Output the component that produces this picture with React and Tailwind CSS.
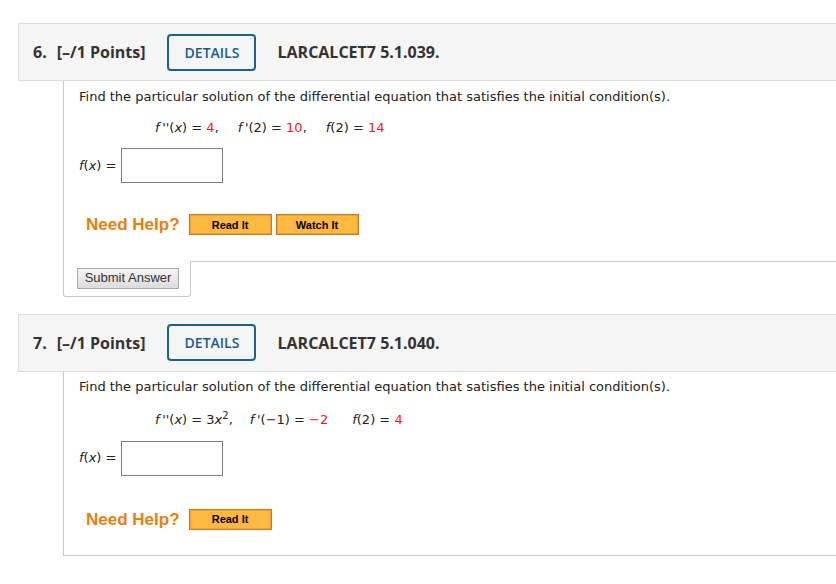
import React from "react";

const vf = { fontFamily: '"DejaVu Sans", Verdana, sans-serif' };
const os = { fontFamily: '"Open Sans", "Noto Sans", sans-serif' };
const ar = { fontFamily: '"Liberation Sans", Arial, sans-serif' };

function Header({ num, code }) {
  return (
    <div
      className="flex items-center h-[58px] bg-[#f5f5f5] border-t border-b border-l border-[#dddddd] text-[#333333]"
      style={os}
    >
      <span className="ml-[14px] text-[16px] font-bold">{num}.</span>
      <span className="ml-[10px] text-[16px] font-bold">[–/1 Points]</span>
      <span className="ml-[22px] flex items-center justify-center w-[89px] h-[37px] border-2 border-[#16638f] rounded-[4px] text-[14px] font-semibold text-[#1a5d8b]">
        DETAILS
      </span>
      <span className="ml-[21px] text-[16px] font-bold">{code}</span>
    </div>
  );
}

function OrangeBtn({ children }) {
  return (
    <span
      className="inline-flex items-center justify-center w-[83px] h-[21px] bg-[#ffb940] border border-[#c77a26] shadow-[inset_0_0_0_1px_#f5a12a] text-[11px] font-bold text-black"
      style={ar}
    >
      {children}
    </span>
  );
}

function Answer({ mt }) {
  return (
    <div className={`flex items-center ${mt}`}>
      <span className="text-[13px] text-[#222]">
        <i>f</i>(<i>x</i>) =
      </span>
      <span className="ml-[5px] w-[102px] h-[35px] border border-[#808080] bg-white" />
    </div>
  );
}

function NeedHelp({ mt, watch }) {
  return (
    <div className={`flex items-center ml-[7px] ${mt}`}>
      <span className="text-[17px] font-bold text-[#e8800c]" style={ar}>
        Need Help?
      </span>
      <span className="ml-[9px] flex">
        <OrangeBtn>Read It</OrangeBtn>
      </span>
      {watch && (
        <span className="ml-[4px] flex">
          <OrangeBtn>Watch It</OrangeBtn>
        </span>
      )}
    </div>
  );
}

const Red = ({ children }) => <span className="text-[#ee1c1c]">{children}</span>;

export default function App() {
  return (
    <div className="w-[836px] h-[584px] bg-white overflow-hidden pt-[23px] pl-[18px]">
      {/* Question 6 */}
      <Header num="6" code="LARCALCET7 5.1.039." />
      <div className="ml-[45px] border-l border-[#c8c8c8] pl-[15px] pt-[8px] pb-[23px] text-[#222]" style={vf}>
        <div className="text-[13px] leading-[16px]">
          Find the particular solution of the differential equation that satisfies the initial condition(s).
        </div>
        <div className="mt-[15px] pl-[76px] text-[13px] leading-[16px] whitespace-nowrap">
          <span>
            <i>f</i>&thinsp;''(<i>x</i>) = <Red>4</Red>,
          </span>
          <span className="ml-[19px]">
            <i>f</i>&thinsp;'(2) = <Red>10</Red>,
          </span>
          <span className="ml-[19px]">
            <i>f</i>(2) = <Red>14</Red>
          </span>
        </div>
        <Answer mt="mt-[12px]" />
        <NeedHelp mt="mt-[29px]" watch />
      </div>
      <div className="ml-[45px] flex">
        <div className="w-[128px] h-[36px] border-l border-r border-b border-[#c8c8c8] rounded-b-[3px] pl-[13px] pt-[7px]">
          <span
            className="flex items-center justify-center w-[102px] h-[21px] border border-[#a8a8a8] bg-gradient-to-b from-[#f6f6f6] to-[#dcdcdc] text-[13px] text-[#333]"
            style={ar}
          >
            Submit Answer
          </span>
        </div>
        <div className="flex-1 border-t border-[#c8c8c8]" />
      </div>

      {/* Question 7 */}
      <div className="mt-[17px]">
        <Header num="7" code="LARCALCET7 5.1.040." />
      </div>
      <div className="ml-[45px] border-l border-b border-[#c8c8c8] pl-[15px] pt-[7px] pb-[23px] text-[#222]" style={vf}>
        <div className="text-[13px] leading-[16px]">
          Find the particular solution of the differential equation that satisfies the initial condition(s).
        </div>
        <div className="mt-[17px] pl-[76px] text-[13px] leading-[16px] whitespace-nowrap">
          <span>
            <i>f</i>&thinsp;''(<i>x</i>) = 3<i>x</i>
            <sup className="text-[10px]">2</sup>,
          </span>
          <span className="ml-[17px]">
            <i>f</i>&thinsp;'(−1) = <Red>−2</Red>
          </span>
          <span className="ml-[24px]">
            <i>f</i>(2) = <Red>4</Red>
          </span>
        </div>
        <Answer mt="mt-[13px]" />
        <NeedHelp mt="mt-[31px]" />
      </div>
    </div>
  );
}
